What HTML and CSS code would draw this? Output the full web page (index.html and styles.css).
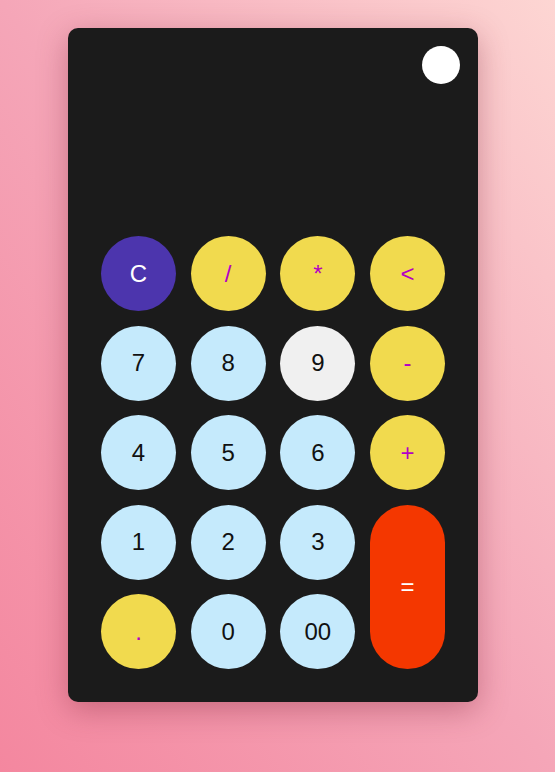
FILE: index.html
```html
<!DOCTYPE html>
<html lang="en">
<head>
<meta charset="utf-8">
<title>Calculator</title>
<link rel="stylesheet" href="styles.css">
</head>
<body>
<div class="calc">
  <div class="top">
    <button class="toggle" aria-label="toggle theme"></button>
  </div>
  <div class="display"></div>
  <div class="keys">
    <button class="key clear">C</button>
    <button class="key op">/</button>
    <button class="key op">*</button>
    <button class="key op">&lt;</button>
    <button class="key num">7</button>
    <button class="key num">8</button>
    <button class="key num active">9</button>
    <button class="key op">-</button>
    <button class="key num">4</button>
    <button class="key num">5</button>
    <button class="key num">6</button>
    <button class="key op">+</button>
    <button class="key num">1</button>
    <button class="key num">2</button>
    <button class="key num">3</button>
    <button class="key equals">=</button>
    <button class="key op">.</button>
    <button class="key num">0</button>
    <button class="key num">00</button>
  </div>
</div>
</body>
</html>
```
FILE: styles.css
```css
html, body {
  margin: 0;
  padding: 0;
}
body {
  min-height: 772px;
  background: linear-gradient(to top right, #f4879f 0%, #f5a6b8 50%, #fdd6d3 100%);
  font-family: "Liberation Sans", Arial, sans-serif;
  padding-top: 28px;
  box-sizing: border-box;
}
.calc {
  width: 410px;
  height: 674px;
  margin-left: 68px;
  background: #1b1b1b;
  border-radius: 10px;
  box-sizing: border-box;
  padding: 18px 18px 33px;
  box-shadow: 0 8px 30px rgba(120, 30, 50, 0.35);
}
.top {
  display: flex;
  justify-content: flex-end;
}
.toggle {
  width: 38px;
  height: 38px;
  border-radius: 50%;
  border: none;
  background: #ffffff;
  padding: 0;
}
.display {
  height: 152px;
}
.keys {
  margin: 0 15px;
  display: grid;
  grid-template-columns: repeat(4, 75px);
  grid-template-rows: repeat(5, 75px);
  justify-content: space-between;
  row-gap: 14.5px;
}
.key {
  width: 75px;
  height: 75px;
  border-radius: 50%;
  border: none;
  padding: 0;
  font-family: "Liberation Sans", Arial, sans-serif;
  font-size: 24px;
  color: #111111;
  display: flex;
  align-items: center;
  justify-content: center;
}
.num {
  background: #c5eafc;
}
.num.active {
  background: #f0f0f0;
}
.op {
  background: #f1da4e;
  color: #b300c4;
}
.clear {
  background: #4c35ad;
  color: #ffffff;
}
.equals {
  grid-column: 4;
  grid-row: 4 / span 2;
  height: auto;
  border-radius: 38px;
  background: #f43700;
  color: #ffffff;
}
```
